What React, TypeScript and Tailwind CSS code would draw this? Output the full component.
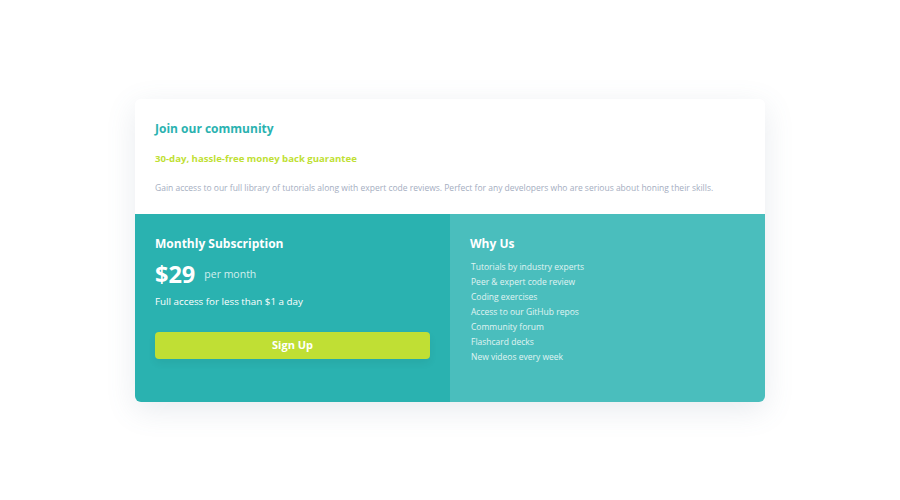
const features = [
  "Tutorials by industry experts",
  "Peer & expert code review",
  "Coding exercises",
  "Access to our GitHub repos",
  "Community forum",
  "Flashcard decks",
  "New videos every week",
];

export default function App() {
  return (
    <div className="flex h-[500px] w-full items-center justify-center bg-white font-['Open_Sans',sans-serif]">
      <div className="w-[630px] overflow-hidden rounded-[6px] shadow-[0_8px_30px_rgba(90,110,140,0.14)]">
        <div className="bg-white px-5 pt-[22px] pb-5">
          <h1 className="text-[12px] leading-4 font-bold text-[#2ab2b0]">
            Join our community
          </h1>
          <h2 className="mt-[14px] text-[9.6px] leading-4 font-bold text-[#c0df34]">
            30-day, hassle-free money back guarantee
          </h2>
          <p className="mt-[15px] text-[8.5px] leading-3 text-[#a5aebf]">
            Gain access to our full library of tutorials along with expert code
            reviews. Perfect for any developers who are serious about honing
            their skills.
          </p>
        </div>
        <div className="grid grid-cols-2">
          <div className="bg-[#2ab2b0] px-5 pt-[22px] pb-[43px] text-white">
            <h3 className="text-[12px] leading-4 font-bold">
              Monthly Subscription
            </h3>
            <div className="mt-[9px] flex h-7 items-center gap-[9px]">
              <span className="text-[23.5px] font-bold">$29</span>
              <span className="text-[10.5px] text-[#d2efee]">per month</span>
            </div>
            <p className="mt-[6px] text-[9.8px] leading-[14px]">
              Full access for less than $1 a day
            </p>
            <button className="mt-[23px] h-[27px] w-full rounded-[4px] bg-[#c0df34] text-[11px] font-bold text-white shadow-[0_4px_8px_rgba(0,0,0,0.06)]">
              Sign Up
            </button>
          </div>
          <div className="bg-[#4abebd] px-5 pt-[22px] text-white">
            <h3 className="text-[12px] leading-4 font-bold">Why Us</h3>
            <ul className="mt-[7px] pl-[1px]">
              {features.map((f) => (
                <li key={f} className="text-[8.5px] leading-[15px] text-[#e0f4f3]">
                  {f}
                </li>
              ))}
            </ul>
          </div>
        </div>
      </div>
    </div>
  );
}
